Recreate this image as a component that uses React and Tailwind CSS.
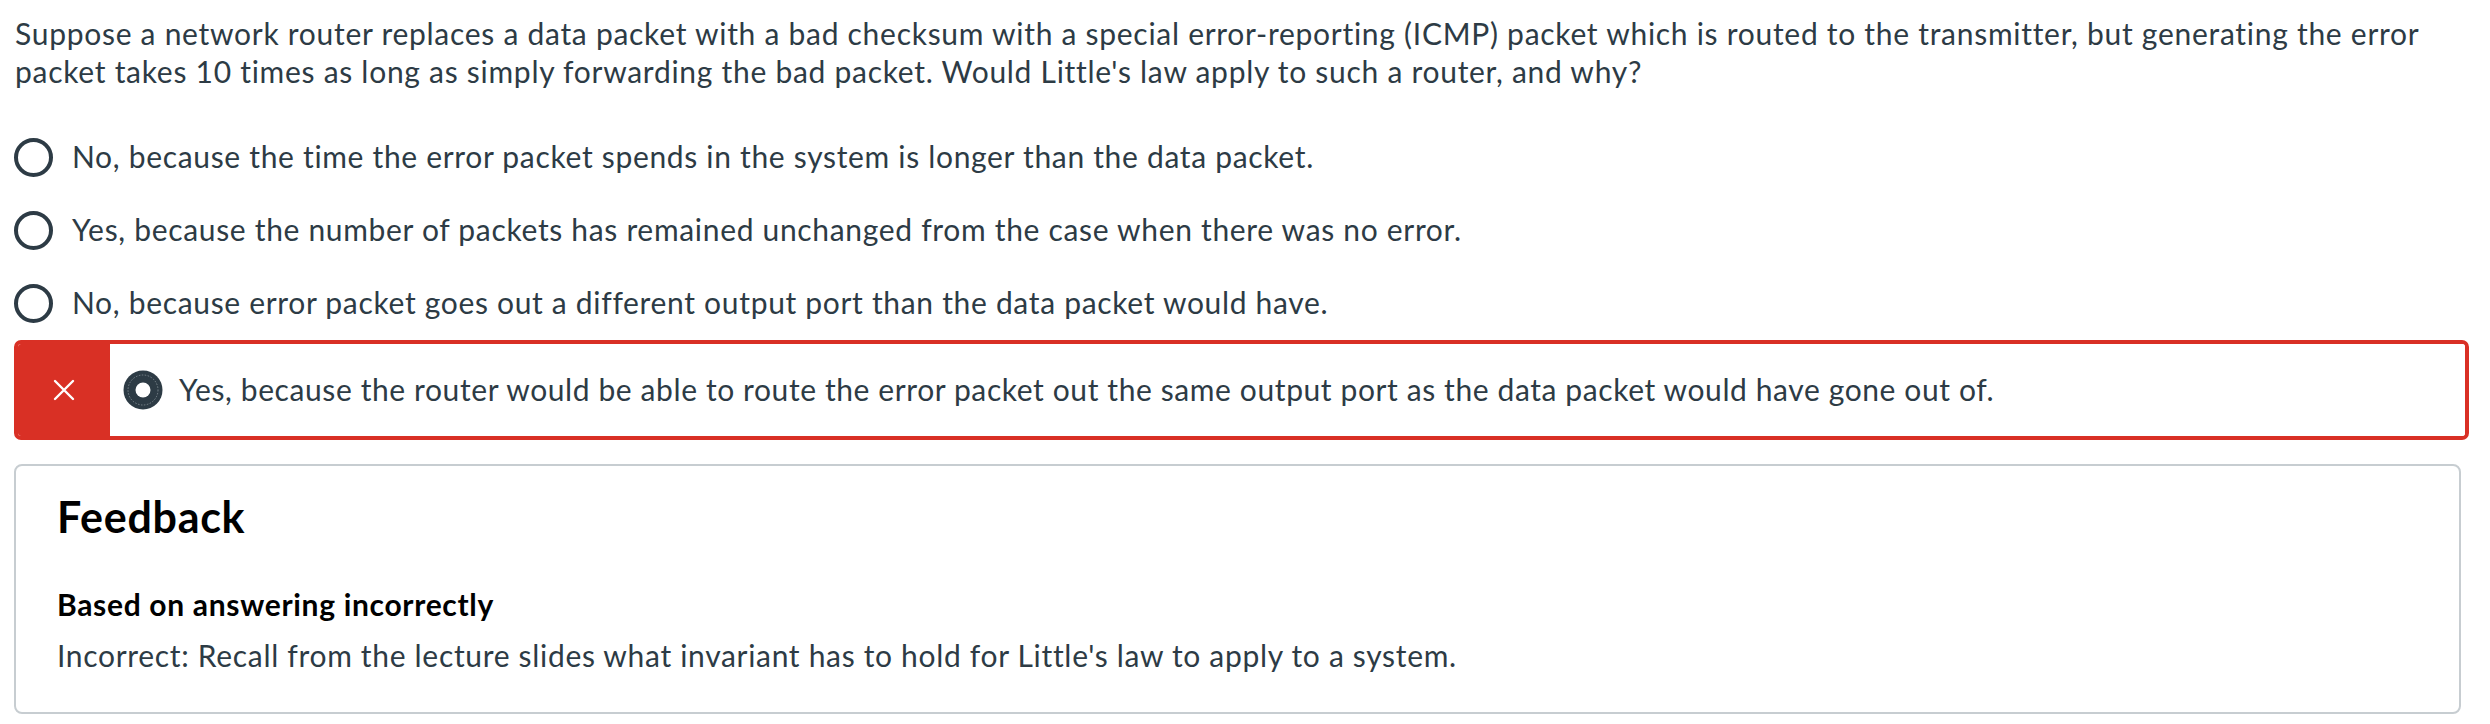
import React from 'react';

const options = [
  { id: 1, text: 'No, because the time the error packet spends in the system is longer than the data packet.' },
  { id: 2, text: 'Yes, because the number of packets has remained unchanged from the case when there was no error.' },
  { id: 3, text: 'No, because error packet goes out a different output port than the data packet would have.' },
];

const selected = 'Yes, because the router would be able to route the error packet out the same output port as the data packet would have gone out of.';

function EmptyRadio() {
  return <span className="block w-[39px] h-[39px] shrink-0 rounded-full border-4 border-[#2d3b45] bg-white" />;
}

function CheckedRadio() {
  return (
    <svg width="40" height="40" viewBox="0 0 40 40" className="shrink-0">
      <circle cx="20" cy="20" r="19.5" fill="#2d3b45" />
      <circle cx="20" cy="20" r="15" fill="none" stroke="#8a949b" strokeWidth="0.8" strokeDasharray="1.5 1.5" />
      <circle cx="20" cy="20" r="7.5" fill="#ffffff" />
    </svg>
  );
}

export default function App() {
  return (
    <div className="bg-white min-h-screen pt-[15px] pl-[14px] pr-[21px] font-['Lato',sans-serif] text-[#2d3b45] text-[30px] leading-[37.8px] tracking-[0.68px] [font-variant-ligatures:none]">
      {/* Question */}
      <p className="pl-[1px] tracking-[0.72px]">
        Suppose a network router replaces a data packet with a bad checksum with a special error-reporting (ICMP) packet which is routed to the transmitter, but generating the error packet takes 10 times as long as simply forwarding the bad packet. Would Little's law apply to such a router, and why?
      </p>

      {/* Answers */}
      <div className="mt-[30px]">
        {options.map((o) => (
          <div key={o.id} className="flex items-center gap-[19px] py-[17px]">
            <EmptyRadio />
            <span>{o.text}</span>
          </div>
        ))}

        <div className="flex h-[100px] border-4 border-[#d93025] rounded-[7px] overflow-hidden">
          <div className="w-[92px] bg-[#d93025] flex items-center justify-center">
            <svg width="22" height="22" viewBox="0 0 22 22">
              <path d="M2 2 L20 20 M20 2 L2 20" stroke="#ffffff" strokeWidth="2.4" strokeLinecap="round" />
            </svg>
          </div>
          <div className="flex-1 flex items-center gap-[16px] pl-[13px] bg-white">
            <CheckedRadio />
            <span className="tracking-[0.6px]">{selected}</span>
          </div>
        </div>
      </div>

      {/* Feedback */}
      <div className="mt-[24px] w-[2447px] border-2 border-[#c7cdd1] rounded-[8px] px-[41px] pt-[25px] pb-[37px]">
        <h2 className="text-[43px] leading-[1.2] tracking-[0.7px] font-bold text-black">Feedback</h2>
        <div className="mt-[44px] font-bold text-black">Based on answering incorrectly</div>
        <div className="mt-[13px]">
          Incorrect: Recall from the lecture slides what invariant has to hold for Little's law to apply to a system.
        </div>
      </div>
    </div>
  );
}
